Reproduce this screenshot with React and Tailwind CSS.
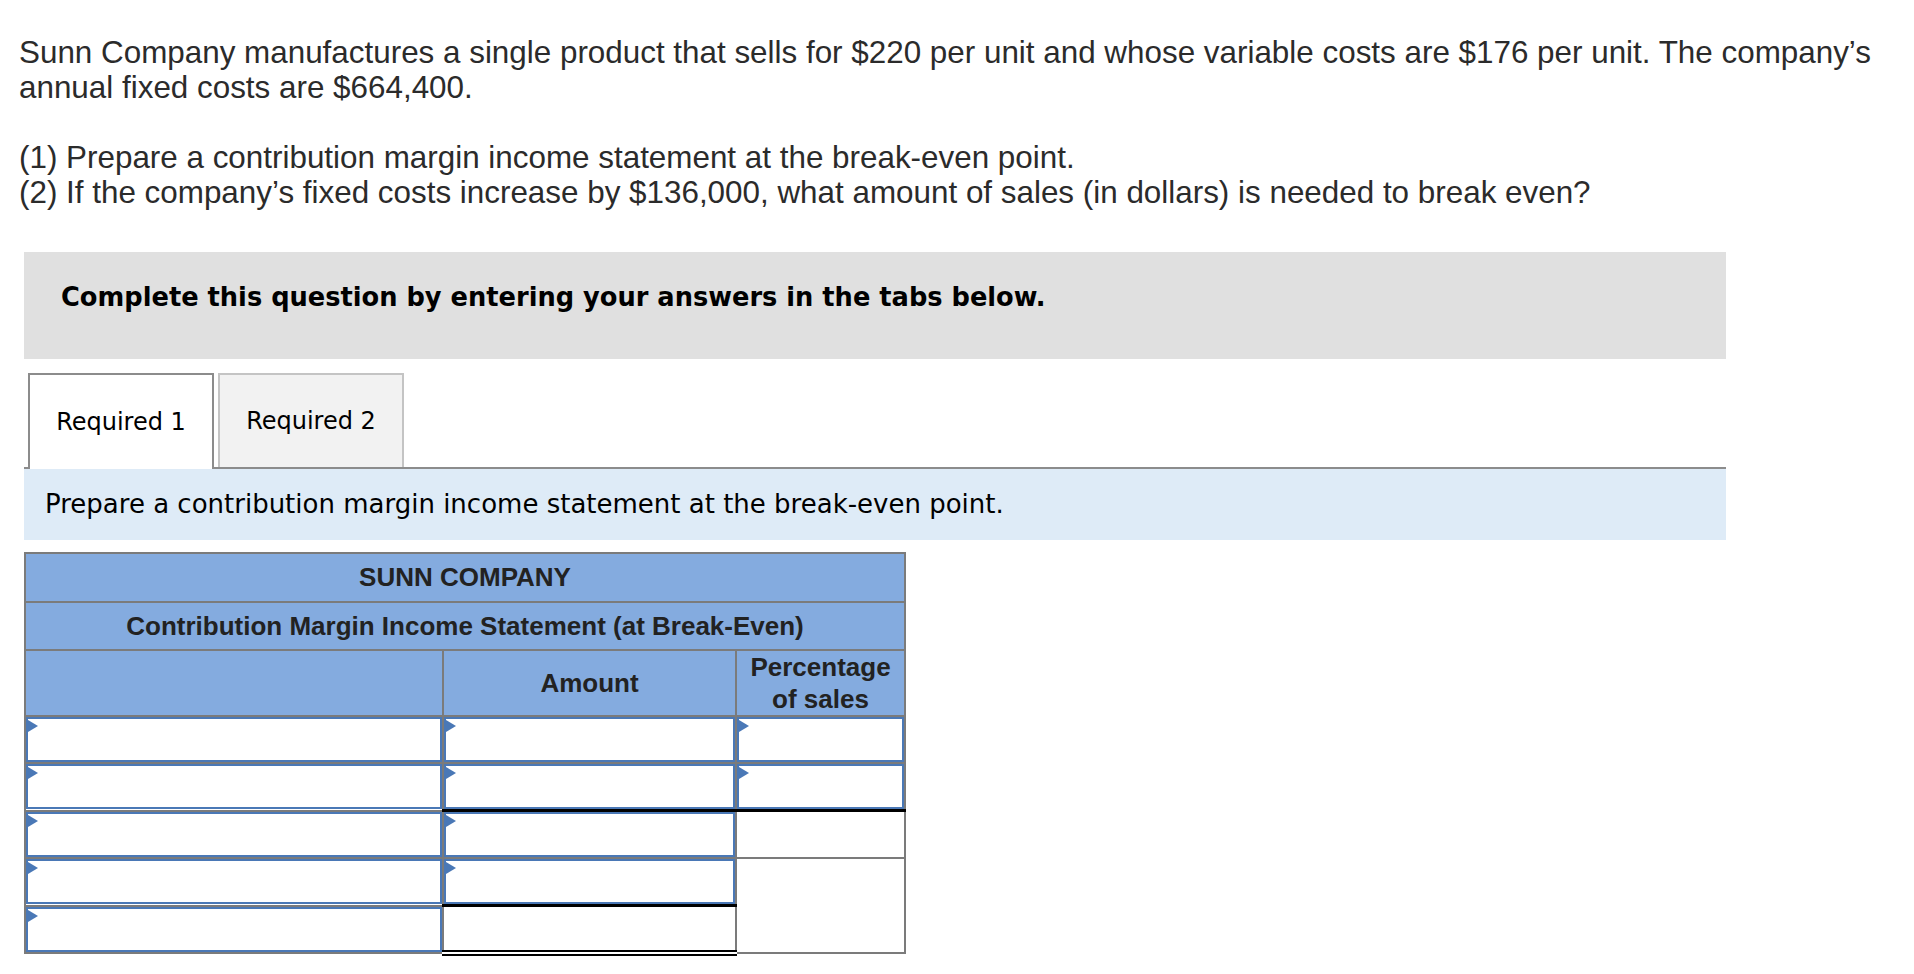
import React from 'react'

const sans = { fontFamily: '"Liberation Sans", Arial, sans-serif' }
const verdana = { fontFamily: '"DejaVu Sans", Verdana, sans-serif' }

function Pick() {
    return (
        <div className="relative h-[45px] w-full border-2 border-[#4a78b6] bg-white">
            <span className="absolute left-0 top-[1px] h-0 w-0 border-y-[6px] border-l-[10px] border-y-transparent border-l-[#4a78b6]" />
        </div>
    )
}

function App() {
    const cell = 'border-2 border-[#7b7b7b] p-0'
    const blackLine = 'border-2 border-b-[3px] border-[#7b7b7b] border-b-black p-0'

    return (
        <div className="min-h-screen bg-white pb-4">
            <div className="pl-[19px] pt-[35px] text-[31.4px] leading-[35px] text-[#2b2b2b]" style={sans}>
                <p>
                    Sunn Company manufactures a single product that sells for $220 per unit and whose variable costs are $176 per unit. The company’s
                    <br />
                    annual fixed costs are $664,400.
                </p>
                <p className="mt-[35px]">
                    (1) Prepare a contribution margin income statement at the break-even point.
                    <br />
                    (2) If the company’s fixed costs increase by $136,000, what amount of sales (in dollars) is needed to break even?
                </p>
            </div>

            <div className="ml-[24px] mt-[42px] w-[1702px]" style={verdana}>
                <div className="h-[107px] bg-[#e0e0e0] pl-[37px] pt-[30px]">
                    <p className="text-[25.7px] font-bold leading-[30px] text-black">
                        Complete this question by entering your answers in the tabs below.
                    </p>
                </div>

                <div className="mt-[14px] flex items-end border-b-2 border-[#8c8c8c] pl-[4px]">
                    <div className="-mb-[2px] flex h-[96px] w-[186px] items-center justify-center border-2 border-b-0 border-[#8c8c8c] bg-white text-[24px] text-black">
                        Required 1
                    </div>
                    <div className="ml-[4px] flex h-[94px] w-[186px] items-center justify-center border-2 border-b-0 border-[#c4c4c4] bg-[#f2f2f2] text-[24px] text-black">
                        Required 2
                    </div>
                </div>

                <div className="flex h-[71px] items-center bg-[#deebf7] pl-[21px] text-[26px] text-black">
                    Prepare a contribution margin income statement at the break-even point.
                </div>

                <table className="mt-[12px] w-[880px] table-fixed border-collapse text-[26px] font-bold text-[#222]" style={sans}>
                    <colgroup>
                        <col className="w-[418px]" />
                        <col className="w-[293px]" />
                        <col className="w-[169px]" />
                    </colgroup>
                    <tbody>
                        <tr className="h-[49px] bg-[#84abdf]">
                            <td colSpan={3} className={`${cell} text-center`}>SUNN COMPANY</td>
                        </tr>
                        <tr className="h-[48px] bg-[#84abdf]">
                            <td colSpan={3} className={`${cell} text-center`}>Contribution Margin Income Statement (at Break-Even)</td>
                        </tr>
                        <tr className="h-[66px] bg-[#84abdf]">
                            <td className={cell}></td>
                            <td className={`${cell} text-center`}>Amount</td>
                            <td className={`${cell} text-center leading-[32px]`}>
                                Percentage
                                <br />
                                of sales
                            </td>
                        </tr>
                        <tr>
                            <td className={cell}><Pick /></td>
                            <td className={cell}><Pick /></td>
                            <td className={cell}><Pick /></td>
                        </tr>
                        <tr>
                            <td className={cell}><Pick /></td>
                            <td className={blackLine}><Pick /></td>
                            <td className={blackLine}><Pick /></td>
                        </tr>
                        <tr>
                            <td className={cell}><Pick /></td>
                            <td className={cell}><Pick /></td>
                            <td className={cell}></td>
                        </tr>
                        <tr>
                            <td className={cell}><Pick /></td>
                            <td className={blackLine}><Pick /></td>
                            <td rowSpan={2} className={cell}></td>
                        </tr>
                        <tr>
                            <td className={cell}><Pick /></td>
                            <td className="border-2 border-b-[6px] border-[#7b7b7b] border-b-black border-double p-0"></td>
                        </tr>
                    </tbody>
                </table>
            </div>
        </div>
    )
}

export default App
